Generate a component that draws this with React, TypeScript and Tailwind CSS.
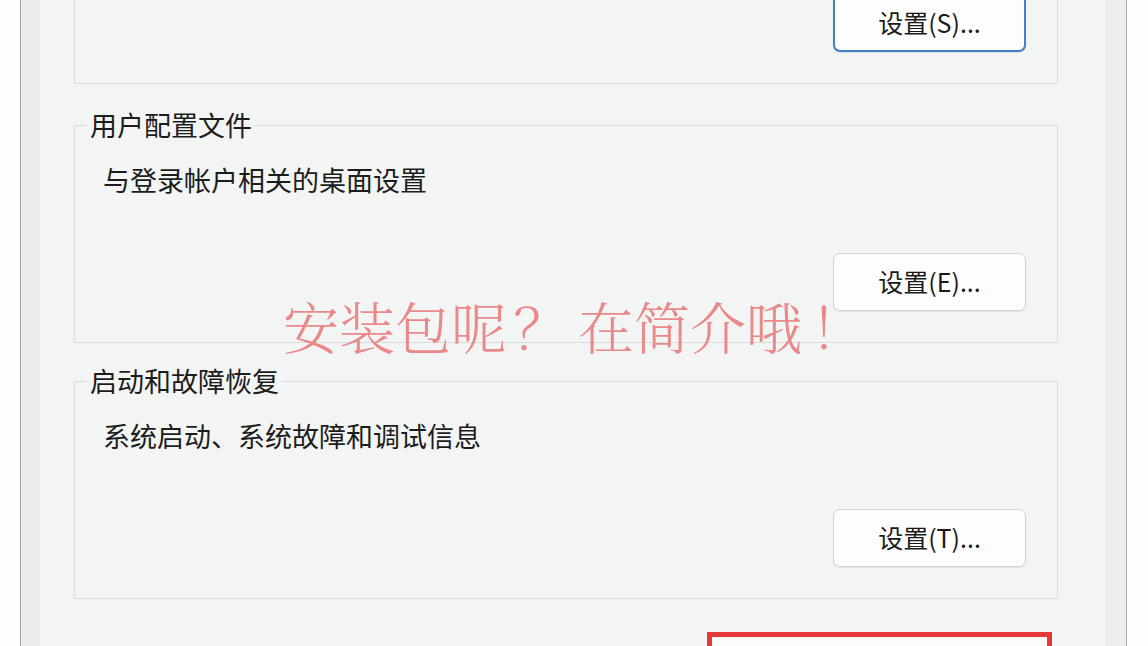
import React from "react";

const font = { fontFamily: '"Noto Sans CJK SC", "Open Sans", sans-serif' };

function Group({
  legend,
  desc,
  btn,
  focused,
  className,
}: {
  legend: string;
  desc: string;
  btn: string;
  focused?: boolean;
  className?: string;
}) {
  return (
    <fieldset
      className={
        "border border-[#d8dbda] rounded-[2px] m-0 p-0 min-w-0 " + (className ?? "")
      }
    >
      <legend className="ml-[12px] px-[3px] h-[34px] text-[27px] leading-[34px] text-[#1c1c1c]">
        {legend}
      </legend>
      <div className="pl-[28px] pr-[31px] pt-[21px] pb-[31px]">
        <p className="h-[34px] text-[27px] leading-[34px] text-[#1c1c1c] whitespace-nowrap">
          {desc}
        </p>
        <div className="flex justify-end mt-[56px]">
          <button
            className={
              "w-[193px] h-[58px] rounded-[7px] bg-[#fdfdfd] text-[25px] text-[#1b1b1b] flex items-center justify-center shadow-[0_1px_1px_rgba(0,0,0,0.08)] " +
              (focused ? "border-2 border-[#3f80c6]" : "border border-[#d2d4d3]")
            }
          >
            {btn}
          </button>
        </div>
      </div>
    </fieldset>
  );
}

export default function App() {
  return (
    <div
      className="relative w-[1148px] h-[646px] overflow-hidden flex bg-white"
      style={font}
    >
      <div className="w-[20px] bg-[#fdfefd]" />
      <div className="w-[20px] bg-[#ebecec] border-l border-[#a3a3a3]" />
      <div className="flex-1 bg-[#f3f5f4] flex flex-col pl-[34px] pr-[48px]">
        <Group
          className="mt-[-151px]"
          legend={"\u00a0"}
          desc={"\u00a0"}
          btn="设置(S)..."
          focused
        />
        <Group
          className="mt-[24px]"
          legend="用户配置文件"
          desc="与登录帐户相关的桌面设置"
          btn="设置(E)..."
        />
        <Group
          className="mt-[21px]"
          legend="启动和故障恢复"
          desc="系统启动、系统故障和调试信息"
          btn="设置(T)..."
        />
        <div className="flex justify-end mt-[33px] pr-[6px]">
          <div className="w-[345px] h-[70px] border-[5px] border-[#e6383b] bg-[#fbfcfc]" />
        </div>
      </div>
      <div className="w-[21px] bg-[#eceeed] border-r border-[#a8a8a8]" />
      <div className="w-[21px] bg-[#fdfefd]" />

      <div
        className="absolute left-[283px] top-[297px] flex text-[56px] leading-none text-[#e98989] whitespace-nowrap pointer-events-none font-light"
        style={{ fontFamily: '"Noto Serif CJK SC", "Noto Sans CJK SC", serif' }}
      >
        <span>安装包呢</span>
        <span className="inline-block w-[71px] pl-[6px]">？</span>
        <span>在简介哦</span>
        <span className="inline-block w-[56px] pl-[8px]">！</span>
      </div>
    </div>
  );
}
